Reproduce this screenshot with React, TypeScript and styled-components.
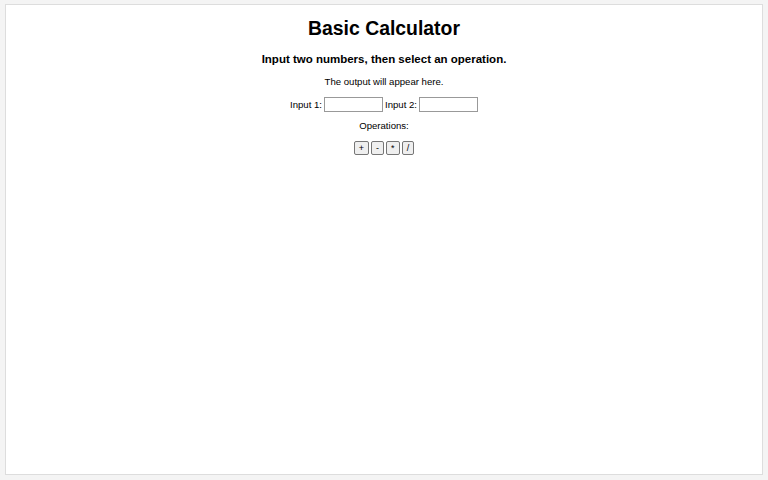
import { useState } from "react";
import styled, { createGlobalStyle } from "styled-components";

const GlobalStyle = createGlobalStyle`
  html, body {
    margin: 0;
    padding: 0;
    background: #f4f4f4;
    font-family: "Liberation Sans", Arial, sans-serif;
  }
  * {
    box-sizing: border-box;
  }
`;

export default function App() {
  const [a, setA] = useState("");
  const [b, setB] = useState("");
  const [output, setOutput] = useState("The output will appear here.");

  const calc = (op: string) => {
    const x = parseFloat(a);
    const y = parseFloat(b);
    if (isNaN(x) || isNaN(y)) {
      setOutput("Please enter two valid numbers.");
      return;
    }
    let r = 0;
    if (op === "+") r = x + y;
    if (op === "-") r = x - y;
    if (op === "*") r = x * y;
    if (op === "/") r = x / y;
    setOutput(`Result: ${r}`);
  };

  return (
    <>
      <GlobalStyle />
      <Page>
        <Title>Basic Calculator</Title>
        <SubTitle>Input two numbers, then select an operation.</SubTitle>
        <Output>{output}</Output>
        <InputRow>
          <Label>Input 1:</Label>
          <NumberInput value={a} onChange={(e) => setA(e.target.value)} />
          <Label>Input 2:</Label>
          <NumberInput value={b} onChange={(e) => setB(e.target.value)} />
        </InputRow>
        <Text>Operations:</Text>
        <ButtonRow>
          {["+", "-", "*", "/"].map((op) => (
            <OpButton key={op} onClick={() => calc(op)}>
              {op}
            </OpButton>
          ))}
        </ButtonRow>
      </Page>
    </>
  );
}

const Page = styled.div`
  margin: 4px 5px 5px 5px;
  height: calc(100vh - 9px);
  background: #ffffff;
  border: 1px solid #dddddd;
  display: flex;
  flex-direction: column;
  align-items: center;
  padding-top: 12px;
`;

const Title = styled.h1`
  margin: 0 0 13px 0;
  font-size: 19.4px;
  font-weight: 700;
  color: #000;
`;

const SubTitle = styled.h2`
  margin: 0 0 11px 0;
  font-size: 11.5px;
  font-weight: 700;
  color: #000;
`;

const Text = styled.div`
  font-size: 9.6px;
  color: #000;
`;

const Output = styled(Text)`
  margin-bottom: 10px;
`;

const InputRow = styled.div`
  display: flex;
  align-items: center;
  gap: 2px;
  margin-bottom: 8px;
`;

const Label = styled.span`
  font-size: 9.6px;
  color: #000;
`;

const NumberInput = styled.input`
  width: 59px;
  height: 15px;
  border: 1px solid #999;
  padding: 0 2px;
  font-size: 10px;
  font-family: inherit;
`;

const ButtonRow = styled.div`
  display: flex;
  gap: 2px;
  margin-top: 10px;
`;

const OpButton = styled.button`
  min-width: 12px;
  height: 14px;
  padding: 0 4px;
  font-size: 9px;
  font-family: inherit;
  background: #efefef;
  border: 1px solid #767676;
  border-radius: 2px;
  cursor: pointer;
`;
